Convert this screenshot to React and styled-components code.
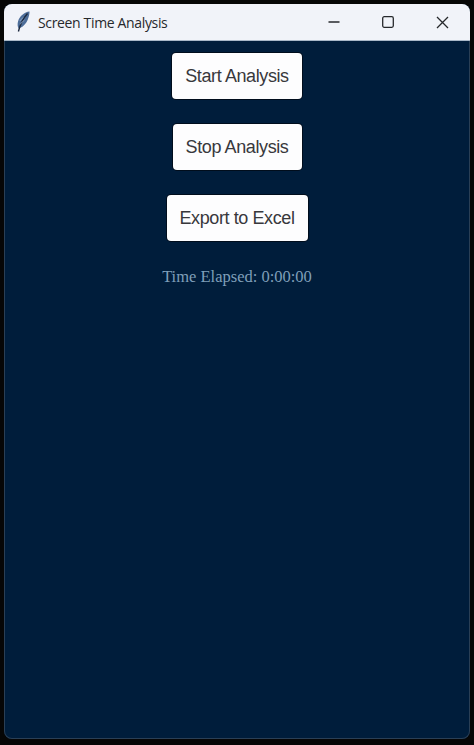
import React from 'react';
import styled, { createGlobalStyle } from 'styled-components';

const GlobalStyle = createGlobalStyle`
  html, body {
    margin: 0;
    height: 100%;
    background: #050505;
  }
`;

const Screen = styled.div`
  width: 474px;
  height: 745px;
  box-sizing: border-box;
  padding: 4px 4px 6px 4px;
  background: #060606;
  overflow: hidden;
`;

const Window = styled.div`
  height: 100%;
  display: flex;
  flex-direction: column;
  border-radius: 8px;
  overflow: hidden;
  background: #001d3b;
  box-shadow: inset 0 0 0 1px #2a3f55;
`;

const TitleBar = styled.div`
  height: 37px;
  flex: none;
  display: flex;
  align-items: center;
  background: #f1f3f9;
  border-bottom: 1px solid #a9b8c8;
  box-sizing: border-box;
  padding-left: 11px;
`;

const Title = styled.span`
  margin-left: 7px;
  font: 14px "Open Sans", "Liberation Sans", sans-serif;
  letter-spacing: -0.35px;
  color: #26282c;
`;

const Controls = styled.div`
  margin-left: auto;
  display: flex;
  align-items: center;
  height: 100%;
  padding-right: 1px;
`;

const ControlButton = styled.div`
  width: 54px;
  height: 100%;
  display: flex;
  align-items: center;
  justify-content: center;
  color: #26282c;
`;

const Content = styled.main`
  flex: 1;
  display: flex;
  flex-direction: column;
  align-items: center;
  padding-top: 12px;
`;

const ActionButton = styled.button`
  height: 46px;
  width: ${(props) => props.$width}px;
  margin-bottom: 25px;
  padding: 0;
  background: #fdfdfe;
  border: none;
  border-radius: 4px;
  box-shadow: 0 0 0 1px #000d1c;
  font: 18px "Liberation Sans", Arial, sans-serif;
  letter-spacing: -0.4px;
  color: #38383c;
`;

const Elapsed = styled.div`
  margin-top: 1px;
  font: 16.5px "Liberation Serif", "Times New Roman", serif;
  color: #7f9fb9;
`;

function Feather() {
  return (
    <svg width="16" height="22" viewBox="0 0 16 22">
      <path d="M14.5 0.5 C9.5 1 4.5 5 3 10.5 C2.3 13.5 2.6 15.8 3.6 17.5 C7.5 16.5 11 13 12.8 8.5 C14 5.5 14.5 3 14.5 0.5 Z" fill="#4d6d99" />
      <path d="M12.5 2.5 C8.5 7 5.5 12 3.4 20.5" stroke="#1d2a40" strokeWidth="1.4" fill="none" />
      <path d="M5.2 13 L9.5 9 M4.8 10 L8 6.5" stroke="#9db2cf" strokeWidth="0.8" />
    </svg>
  );
}

export default function App() {
  return (
    <Screen>
      <GlobalStyle />
      <Window>
        <TitleBar>
          <Feather />
          <Title>Screen Time Analysis</Title>
          <Controls>
            <ControlButton>
              <svg width="12" height="12" viewBox="0 0 12 12">
                <path d="M0.5 6 H11.5" stroke="currentColor" strokeWidth="1.3" />
              </svg>
            </ControlButton>
            <ControlButton>
              <svg width="12" height="12" viewBox="0 0 12 12">
                <rect x="0.7" y="0.7" width="10.6" height="10.6" rx="1.5" stroke="currentColor" strokeWidth="1.3" fill="none" />
              </svg>
            </ControlButton>
            <ControlButton>
              <svg width="13" height="13" viewBox="0 0 13 13">
                <path d="M1 1 L12 12 M12 1 L1 12" stroke="currentColor" strokeWidth="1.3" />
              </svg>
            </ControlButton>
          </Controls>
        </TitleBar>
        <Content>
          <ActionButton $width={130}>Start Analysis</ActionButton>
          <ActionButton $width={129}>Stop Analysis</ActionButton>
          <ActionButton $width={141}>Export to Excel</ActionButton>
          <Elapsed>Time Elapsed: 0:00:00</Elapsed>
        </Content>
      </Window>
    </Screen>
  );
}
